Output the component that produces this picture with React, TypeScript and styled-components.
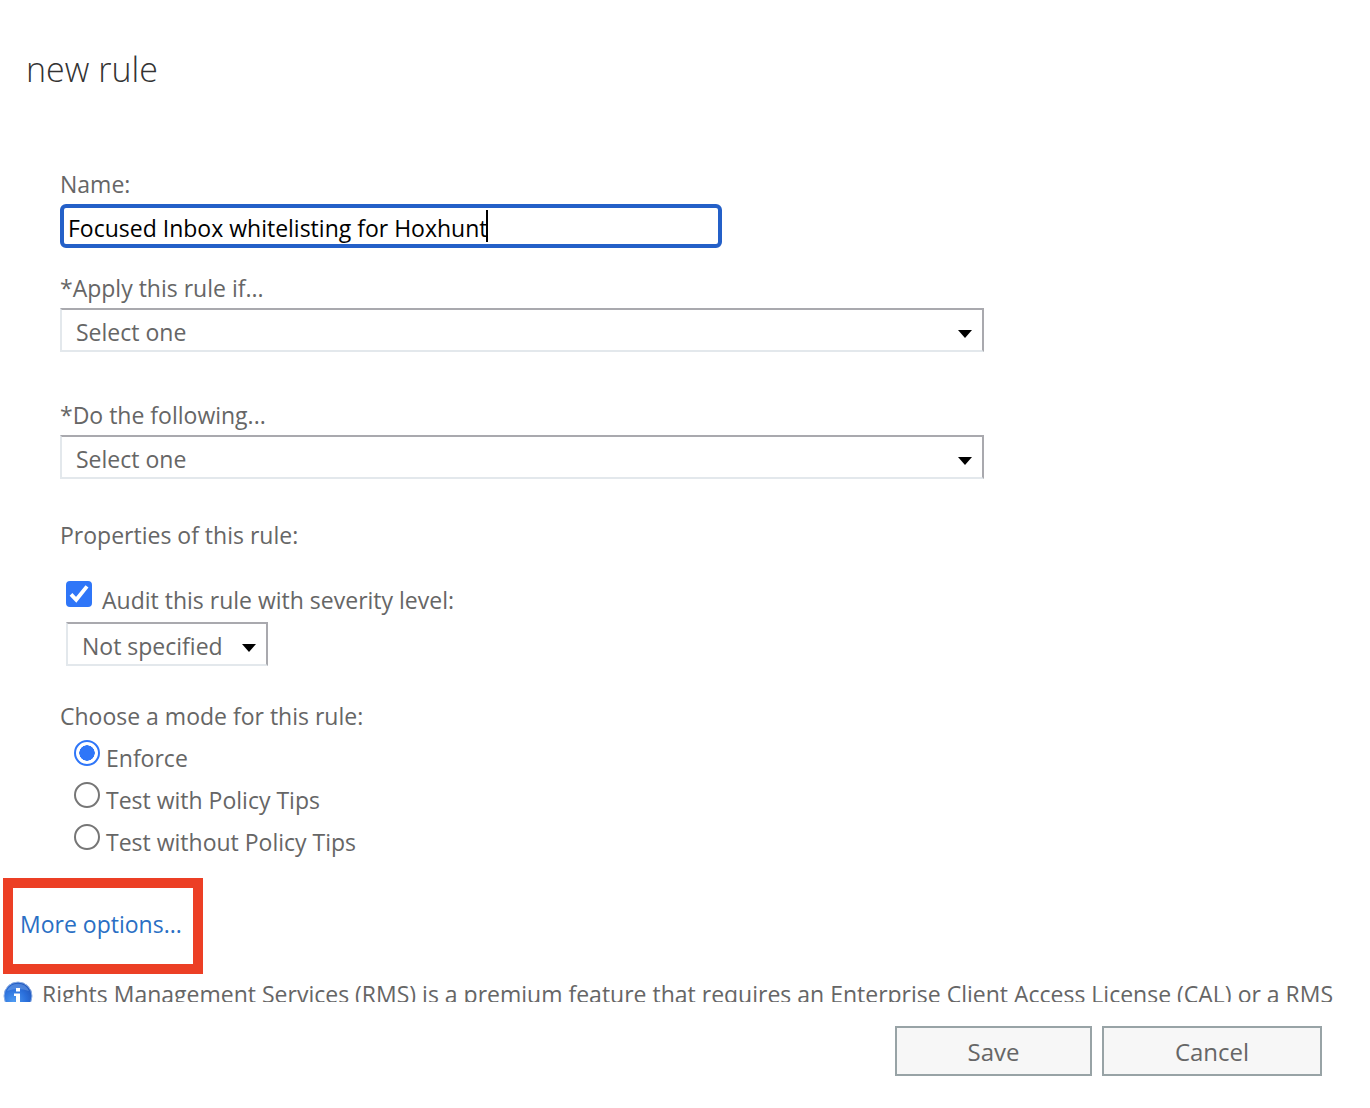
import React, { useState } from "react";
import styled, { createGlobalStyle } from "styled-components";

const GlobalStyle = createGlobalStyle`
  *, *::before, *::after { box-sizing: border-box; }
  body {
    margin: 0;
    background: #fff;
    color: #666;
    font-family: "Open Sans", "Noto Sans", sans-serif;
    font-size: 23px;
    line-height: 32px;
  }
  input, select, button { font: inherit; color: inherit; margin: 0; }
`;

const Dialog = styled.form`
  display: flex;
  flex-direction: column;
  height: 100vh;
`;

const Content = styled.main`
  flex: 1;
  min-height: 0;
  overflow: hidden;
`;

const Title = styled.h1`
  margin: 0;
  padding: 45px 26px 75px;
  color: #333;
  font-size: 34px;
  font-weight: 300;
  line-height: 48px;
`;

const Fields = styled.div`
  display: flex;
  flex-direction: column;
  align-items: flex-start;
  padding: 0 60px;
`;

const Field = styled.div<{ $gap: number }>`
  display: flex;
  flex-direction: column;
  gap: 4px;
  width: 100%;
  margin-bottom: ${(p) => p.$gap}px;
`;

const TextBoxWrap = styled.div`
  position: relative;
  width: 100%;
  max-width: 662px;
`;

const TextBox = styled.input`
  display: block;
  width: 100%;
  height: 44px;
  padding: 4px 4px 0;
  border: 4px solid #2460c8;
  border-radius: 6px;
  outline: none;
  background: #fff;
  color: #000;
`;

const Caret = styled.span`
  position: absolute;
  top: 6px;
  left: 426px;
  width: 2px;
  height: 32px;
  background: #000;
`;

const SelectWrap = styled.div<{ $width: number }>`
  position: relative;
  width: 100%;
  max-width: ${(p) => p.$width}px;
`;

const SelectBox = styled.select`
  display: block;
  appearance: none;
  width: 100%;
  height: 44px;
  padding: 4px 40px 0 14px;
  border: 2px solid;
  border-color: #a9a9ae #a9a9ae #e3e8ec #e3e8ec;
  border-radius: 0;
  outline: none;
  background: #fff;
`;

const Arrow = styled.svg`
  position: absolute;
  top: 21px;
  right: 11px;
  width: 16px;
  height: 10px;
  pointer-events: none;
`;

const SectionText = styled.div`
  margin-bottom: 33px;
`;

const Audit = styled.div`
  display: flex;
  flex-direction: column;
  gap: 6px;
  width: 100%;
  padding-left: 6px;
  margin-bottom: 34px;
`;

const Choice = styled.label<{ $gap: number }>`
  display: flex;
  align-items: flex-start;
  gap: ${(p) => p.$gap}px;
`;

const CheckWrap = styled.span`
  position: relative;
  display: block;
  width: 26px;
  height: 26px;
  margin-top: -3px;
`;

const CheckBox = styled.input`
  display: block;
  appearance: none;
  width: 26px;
  height: 26px;
  border: 2px solid #767676;
  border-radius: 4px;
  background: #fff;

  &:checked {
    border-color: #2f76f8;
    background: #2f76f8;
  }
`;

const CheckMark = styled.svg`
  position: absolute;
  inset: 0;
  pointer-events: none;
`;

const Modes = styled.fieldset`
  display: flex;
  flex-direction: column;
  gap: 10px;
  min-width: 0;
  margin: 0 0 20px;
  padding: 0 0 0 14px;
  border: 0;
`;

const ModesTitle = styled.legend`
  margin: 0 0 10px -14px;
  padding: 0;
`;

const Radio = styled.input`
  appearance: none;
  width: 26px;
  height: 26px;
  padding: 3px;
  border: 2px solid #767676;
  border-radius: 50%;

  ${Choice} > & { margin-top: -2px; }

  &:checked {
    border-color: #2f76f8;
    background: radial-gradient(circle closest-side, #2f76f8 94%, transparent) content-box;
  }
`;

const Highlight = styled.div`
  display: flex;
  align-items: center;
  width: 200px;
  height: 96px;
  margin: 0 0 4px 3px;
  padding: 0 0 4px 7px;
  border: 10px solid #ec3f25;
`;

const MoreLink = styled.a`
  color: #2a6fc4;
  text-decoration: none;
  white-space: nowrap;
`;

const Notice = styled.p`
  display: flex;
  gap: 9px;
  margin: 0;
  padding-left: 3px;
  white-space: nowrap;
`;

const InfoIcon = styled.svg`
  flex: none;
  width: 30px;
  height: 30px;
  margin-top: 3px;
`;

const Footer = styled.footer`
  display: flex;
  justify-content: flex-end;
  gap: 10px;
  padding: 24px 48px 32px;
`;

const Button = styled.button<{ $width: number }>`
  width: ${(p) => p.$width}px;
  height: 50px;
  padding: 2px 0 0;
  border: 2px solid #98a3a6;
  background: #f7f7f7;
  font-size: 24px;
`;

type DropDownProps = { id: string; label?: string; text: string; width: number };

function DropDown({ id, label, text, width }: DropDownProps) {
  return (
    <SelectWrap $width={width}>
      <SelectBox id={id} aria-label={label}>
        <option>{text}</option>
      </SelectBox>
      <Arrow viewBox="0 0 16 10" aria-hidden="true">
        <path d="M1 1h14L8 9z" fill="#000" />
      </Arrow>
    </SelectWrap>
  );
}

const modes = ["Enforce", "Test with Policy Tips", "Test without Policy Tips"];

export default function App() {
  const [name, setName] = useState("Focused Inbox whitelisting for Hoxhunt");
  const [audit, setAudit] = useState(true);
  const [mode, setMode] = useState(modes[0]);

  return (
    <>
      <GlobalStyle />
      <Dialog onSubmit={(e) => e.preventDefault()}>
        <Content>
          <Title>new rule</Title>
          <Fields>
            <Field $gap={24}>
              <label htmlFor="name">Name:</label>
              <TextBoxWrap>
                <TextBox id="name" value={name} spellCheck={false} onChange={(e) => setName(e.target.value)} />
                <Caret />
              </TextBoxWrap>
            </Field>
            <Field $gap={47}>
              <label htmlFor="condition">*Apply this rule if...</label>
              <DropDown id="condition" text="Select one" width={924} />
            </Field>
            <Field $gap={40}>
              <label htmlFor="action">*Do the following...</label>
              <DropDown id="action" text="Select one" width={924} />
            </Field>
            <SectionText>Properties of this rule:</SectionText>
            <Audit>
              <Choice $gap={10}>
                <CheckWrap>
                  <CheckBox type="checkbox" checked={audit} onChange={(e) => setAudit(e.target.checked)} />
                  {audit && (
                    <CheckMark viewBox="0 0 26 26" aria-hidden="true">
                      <path d="M5 13.400l5.200 5.400L21 5.400" fill="none" stroke="#fff" strokeWidth="3.8" />
                    </CheckMark>
                  )}
                </CheckWrap>
                Audit this rule with severity level:
              </Choice>
              <DropDown id="severity" label="Severity level" text="Not specified" width={202} />
            </Audit>
            <Modes>
              <ModesTitle>Choose a mode for this rule:</ModesTitle>
              {modes.map((m) => (
                <Choice key={m} $gap={6}>
                  <Radio type="radio" name="mode" checked={mode === m} onChange={() => setMode(m)} />
                  {m}
                </Choice>
              ))}
            </Modes>
          </Fields>
          <Highlight>
            <MoreLink href="#more">More options...</MoreLink>
          </Highlight>
          <Notice>
            <InfoIcon viewBox="0 0 30 30" aria-hidden="true">
              <defs>
                <radialGradient id="ball" cx="0.35" cy="0.7" r="0.75">
                  <stop offset="0" stopColor="#4f9cf2" />
                  <stop offset="0.6" stopColor="#2b70dc" />
                  <stop offset="1" stopColor="#2258bc" />
                </radialGradient>
              </defs>
              <circle cx="15" cy="15" r="14" fill="url(#ball)" stroke="#8fb0e4" />
              <path d="M4 10a12 12 0 0 1 22 0q-11-4-22 0z" fill="#8ab4f0" opacity="0.4" />
              <path d="M13 7h4v3.500h-4zM11 12.500h6V22h2v2.500h-8V22h2v-7h-2z" fill="#fff" />
            </InfoIcon>
            Rights Management Services (RMS) is a premium feature that requires an Enterprise Client Access License (CAL) or a RMS
          </Notice>
        </Content>
        <Footer>
          <Button $width={197} type="submit">Save</Button>
          <Button $width={220} type="button">Cancel</Button>
        </Footer>
      </Dialog>
    </>
  );
}
